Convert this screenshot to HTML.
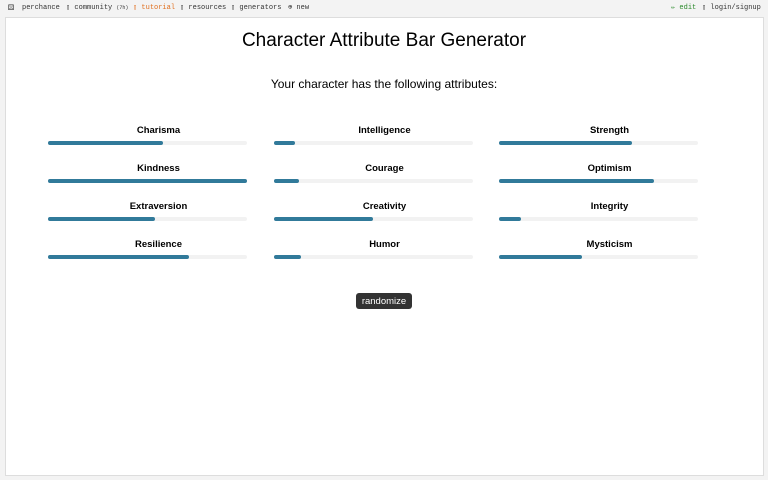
<!DOCTYPE html>
<html><head><style>
body{margin:0;width:768px;height:480px;background:#f3f3f3;font-family:"Liberation Sans",sans-serif;position:relative;overflow:hidden}
.top{position:absolute;top:0;left:0;right:0;height:17px;font-family:"Liberation Mono",monospace;font-size:7px;color:#333;line-height:17px;white-space:nowrap}
.top span{position:absolute;top:0;white-space:nowrap}
.card{position:absolute;left:5px;top:17px;width:757px;height:457px;background:#fff;border:1px solid #ddd}
h1{position:absolute;top:30px;left:0;width:768px;text-align:center;font-size:19px;font-weight:normal;margin:0;color:#000}
.sub{position:absolute;top:77px;left:0;width:768px;text-align:center;font-size:12px}
.a{position:absolute;width:199px}
.a b{display:block;text-align:center;font-size:9.5px;height:12px;line-height:12px;position:relative;left:11px}
.t{position:absolute;top:16px;left:0;width:199px;height:4px;background:#f2f2f2;border-radius:2px}
.f{height:4px;background:#317a9a;border-radius:2px}
.btn{position:absolute;left:356px;top:293px;width:56px;height:16px;background:#333;color:#fff;font-size:9.5px;text-align:center;line-height:17px;border-radius:3px}
</style></head><body>
<div class="top">
<span style="left:8px;font-size:10px">⚄</span><span style="left:22px">perchance</span>
<span style="left:66px">▯ community <small style="font-size:5px">(7h)</small></span>
<span style="left:133px;color:#e07020">▯ tutorial</span>
<span style="left:180px">▯ resources</span>
<span style="left:231px">▯ generators</span>
<span style="left:288px">⊕ new</span>
<span style="left:671px;color:#2a8a2a">✏ edit</span>
<span style="left:702px">▯ login/signup</span>
</div>
<div class="card"></div>
<h1>Character Attribute Bar Generator</h1>
<div class="sub">Your character has the following attributes:</div>

<div class="a" style="left:48px;top:125px"><b>Charisma</b><div class="t"><div class="f" style="width:115px"></div></div></div>
<div class="a" style="left:274px;top:125px"><b>Intelligence</b><div class="t"><div class="f" style="width:21px"></div></div></div>
<div class="a" style="left:499px;top:125px"><b>Strength</b><div class="t"><div class="f" style="width:133px"></div></div></div>

<div class="a" style="left:48px;top:163px"><b>Kindness</b><div class="t"><div class="f" style="width:199px"></div></div></div>
<div class="a" style="left:274px;top:163px"><b>Courage</b><div class="t"><div class="f" style="width:25px"></div></div></div>
<div class="a" style="left:499px;top:163px"><b>Optimism</b><div class="t"><div class="f" style="width:155px"></div></div></div>

<div class="a" style="left:48px;top:201px"><b>Extraversion</b><div class="t"><div class="f" style="width:107px"></div></div></div>
<div class="a" style="left:274px;top:201px"><b>Creativity</b><div class="t"><div class="f" style="width:99px"></div></div></div>
<div class="a" style="left:499px;top:201px"><b>Integrity</b><div class="t"><div class="f" style="width:22px"></div></div></div>

<div class="a" style="left:48px;top:239px"><b>Resilience</b><div class="t"><div class="f" style="width:141px"></div></div></div>
<div class="a" style="left:274px;top:239px"><b>Humor</b><div class="t"><div class="f" style="width:27px"></div></div></div>
<div class="a" style="left:499px;top:239px"><b>Mysticism</b><div class="t"><div class="f" style="width:83px"></div></div></div>

<div class="btn">randomize</div>
</body></html>
